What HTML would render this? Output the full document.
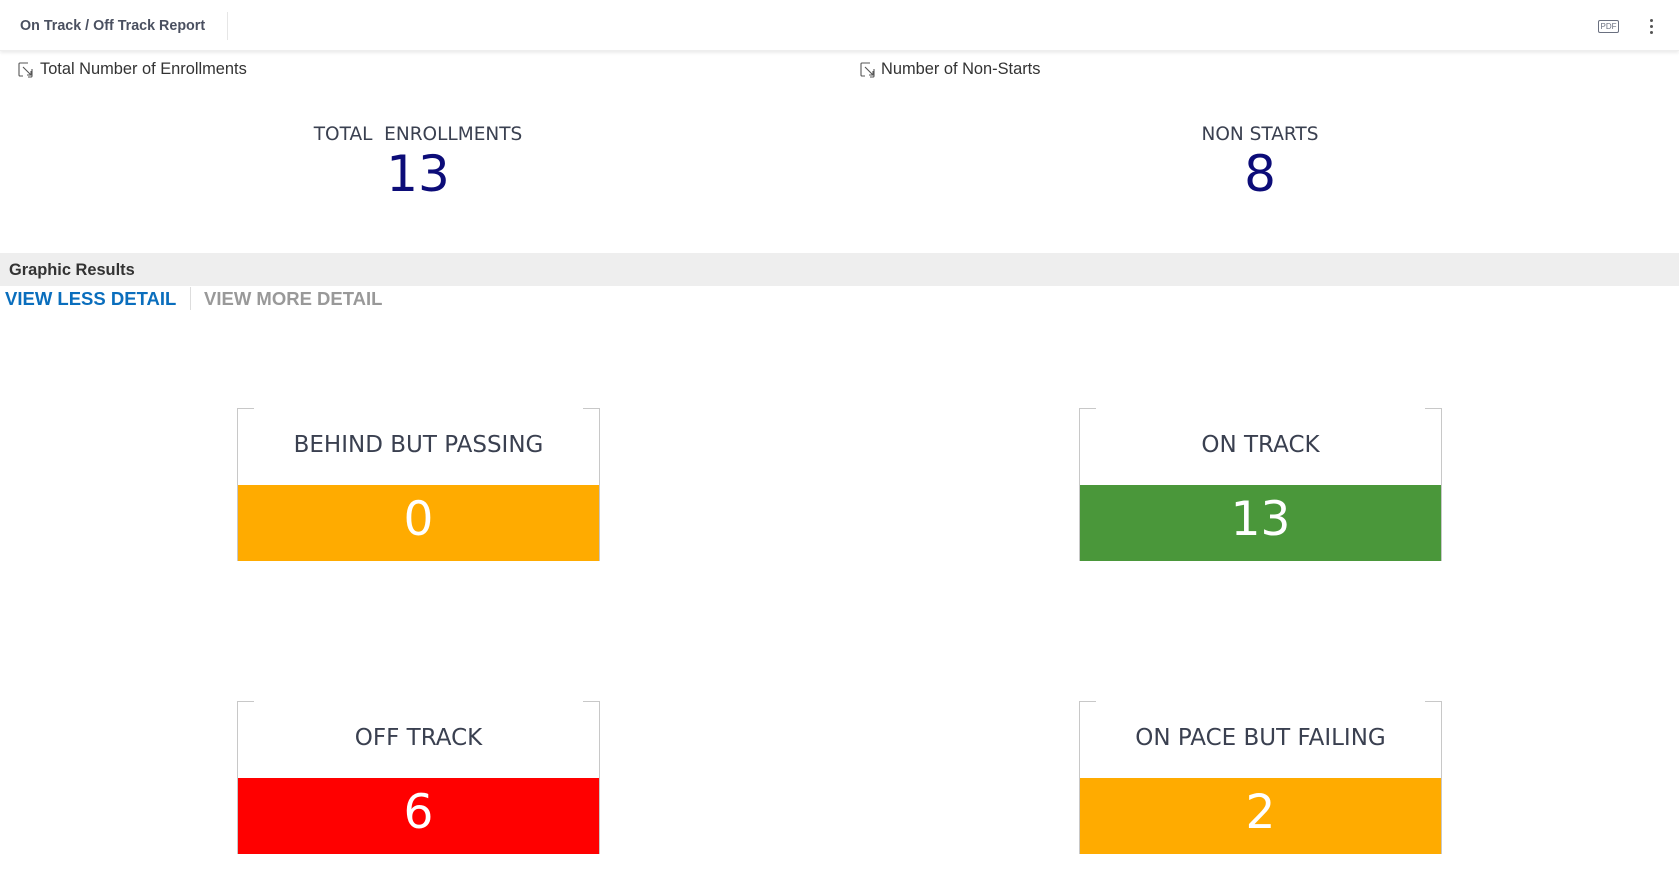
<!DOCTYPE html>
<html><head><meta charset="utf-8"><style>
*{margin:0;padding:0;box-sizing:border-box}
body{width:1679px;height:881px;background:#fff;font-family:"Liberation Sans",sans-serif;position:relative;overflow:hidden;color:#3a4050}
.hdr{position:absolute;left:0;top:0;width:1679px;height:51px;background:#fff;box-shadow:0 2px 3px rgba(0,0,0,0.08);border-bottom:1px solid #eee}
.abs{position:absolute;white-space:nowrap}
.card{position:absolute;width:363px;height:153px;border-left:1px solid #c8c8c8;border-right:1px solid #c8c8c8}
.card:before,.card:after{content:"";position:absolute;top:0;width:16px;height:1px;background:#c8c8c8}
.card:before{left:0}.card:after{right:0}
.card .t{position:absolute;top:0;left:0;right:0;height:77px;text-align:center;line-height:74px;font-family:"DejaVu Sans","Liberation Sans",sans-serif;font-size:23px;color:#3a4050}
.card .n{position:absolute;top:77px;left:0;right:0;height:76px;text-align:center;line-height:70px;font-family:"DejaVu Sans","Liberation Sans",sans-serif;font-size:47px;color:#fff}
</style></head><body>
<div class="hdr"></div>
<div class="abs" style="left:20px;top:18px;font-size:14.3px;font-weight:bold;color:#4a5060">On Track / Off Track Report</div>
<div class="abs" style="left:227px;top:12px;width:1px;height:28px;background:#e6e6e6"></div>
<div class="abs" style="left:1598px;top:20px;width:21px;height:13px;border:1px solid #6a7080;border-radius:2px;font-size:8px;line-height:11px;text-align:center;color:#6a7080">PDF</div>
<div class="abs" style="left:1650px;top:19px;width:3px;height:3px;background:#555;border-radius:2px"></div>
<div class="abs" style="left:1650px;top:25px;width:3px;height:3px;background:#555;border-radius:2px"></div>
<div class="abs" style="left:1650px;top:31px;width:3px;height:3px;background:#555;border-radius:2px"></div>

<svg class="abs" style="left:18px;top:62px" width="16" height="16" viewBox="0 0 16 16"><path d="M10 1H2a1 1 0 0 0-1 1v11a1 1 0 0 0 1 1h3M5 5l8 8M13 9v4h-4M14 7V14a1 1 0 0 1-1 1H10" fill="none" stroke="#555" stroke-width="1.1"/></svg>
<div class="abs" style="left:40px;top:60px;font-size:16.4px;color:#333">Total Number of Enrollments</div>
<svg class="abs" style="left:860px;top:62px" width="16" height="16" viewBox="0 0 16 16"><path d="M10 1H2a1 1 0 0 0-1 1v11a1 1 0 0 0 1 1h3M5 5l8 8M13 9v4h-4M14 7V14a1 1 0 0 1-1 1H10" fill="none" stroke="#555" stroke-width="1.1"/></svg>
<div class="abs" style="left:881px;top:60px;font-size:16.4px;color:#333">Number of Non-Starts</div>

<div class="abs" style="left:218px;width:400px;top:124px;text-align:center;font-family:'DejaVu Sans',sans-serif;font-size:18.5px;color:#3a4050">TOTAL&nbsp; ENROLLMENTS</div>
<div class="abs" style="left:218px;width:400px;top:145px;text-align:center;font-family:'DejaVu Sans',sans-serif;font-size:50px;color:#0c0c78">13</div>
<div class="abs" style="left:1060px;width:400px;top:124px;text-align:center;font-family:'DejaVu Sans',sans-serif;font-size:18.5px;color:#3a4050">NON STARTS</div>
<div class="abs" style="left:1060px;width:400px;top:145px;text-align:center;font-family:'DejaVu Sans',sans-serif;font-size:50px;color:#0c0c78">8</div>

<div class="abs" style="left:0;top:253px;width:1679px;height:33px;background:#eeeeee"></div>
<div class="abs" style="left:9px;top:261px;font-size:16.4px;font-weight:bold;color:#333">Graphic Results</div>
<div class="abs" style="left:5px;top:288px;font-size:18.5px;font-weight:bold;color:#0a6ebd">VIEW LESS DETAIL</div>
<div class="abs" style="left:190px;top:287px;width:1px;height:23px;background:#ddd"></div>
<div class="abs" style="left:204px;top:288px;font-size:18.5px;font-weight:bold;color:#999">VIEW MORE DETAIL</div>

<div class="card" style="left:237px;top:408px"><div class="t">BEHIND BUT PASSING</div><div class="n" style="background:#ffab00">0</div></div>
<div class="card" style="left:1079px;top:408px"><div class="t">ON TRACK</div><div class="n" style="background:#4a973a">13</div></div>
<div class="card" style="left:237px;top:701px"><div class="t">OFF TRACK</div><div class="n" style="background:#ff0000">6</div></div>
<div class="card" style="left:1079px;top:701px"><div class="t">ON PACE BUT FAILING</div><div class="n" style="background:#ffab00">2</div></div>
</body></html>
